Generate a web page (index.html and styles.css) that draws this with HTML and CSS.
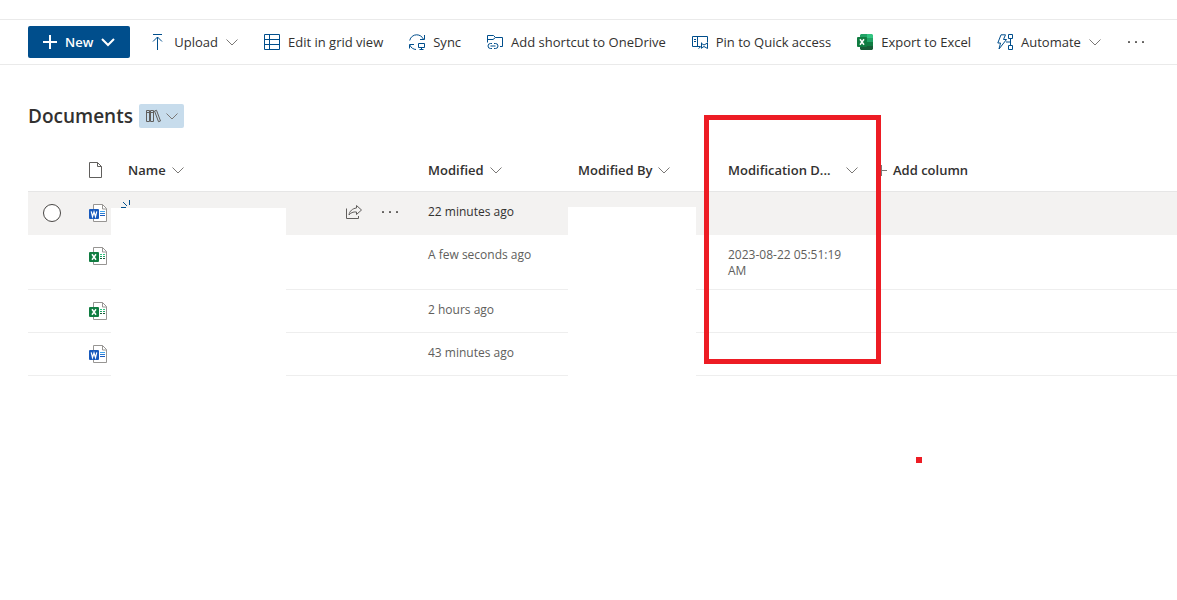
FILE: index.html
```html
<!DOCTYPE html>
<html lang="en">
<head>
    <meta charset="utf-8">
    <title>Documents</title>
    <link rel="stylesheet" href="styles.css">
</head>
<body>
    <svg class="defs" aria-hidden="true">
        <symbol id="chevron" viewBox="0 0 12 12"><path d="M.5 3.500 6 9l5.500-5.500"/></symbol>
        <symbol id="dots" viewBox="0 0 18 16"><g fill="currentColor" stroke="none"><rect x="1" y="7" width="2" height="2" rx=".6"/><rect x="8" y="7" width="2" height="2" rx=".6"/><rect x="15" y="7" width="2" height="2" rx=".6"/></g></symbol>
        <symbol id="word" viewBox="0 0 18 18">
            <path d="M4.500.5h9l4 4v13h-13z" fill="#fff" stroke="#979593"/>
            <path d="M13.500.5v4.500h4" fill="none" stroke="#979593"/>
            <path d="M11 7.500h5" stroke="#41a5ee"/><path d="M11 9.500h5" stroke="#2b7cd3"/><path d="M11 11.500h5" stroke="#185abd"/>
            <rect y="5" width="10" height="10" rx="1" fill="#185abd" stroke="none"/>
            <path d="M2.200 7.300 3.500 12.500 5 8l1.500 4.500 1.300-5.200" fill="none" stroke="#fff" stroke-width="1.200"/>
        </symbol>
        <symbol id="excel" viewBox="0 0 18 18">
            <path d="M4.500.5h9l4 4v13h-13z" fill="#fff" stroke="#979593"/>
            <path d="M13.500.5v4.500h4" fill="none" stroke="#979593"/>
            <path d="M11 7.500h2m1 0h2" stroke="#33c481"/><path d="M11 9.500h2m1 0h2" stroke="#21a366"/><path d="M11 11.500h2m1 0h2" stroke="#185c37"/>
            <rect y="5" width="10" height="10" rx="1" fill="#107c41" stroke="none"/>
            <path d="m3 7.300 4 5.400m0-5.400-4 5.400" stroke="#fff" stroke-width="1.500"/>
        </symbol>
    </svg>

    <nav class="toolbar" aria-label="Library commands">
        <button class="new-btn">
            <svg class="icon" viewBox="0 0 16 16"><path d="M8 1v14M1 8h14"/></svg>
            <span>New</span>
            <svg class="icon" viewBox="0 0 16 16"><path d="m2 5 6 6 6-6"/></svg>
        </button>
        <button class="cmd">
            <svg class="icon" viewBox="0 0 16 16"><path d="M3 .5h9M7.500 16V3M3 7.500 7.500 3 12 7.500"/></svg>
            <span>Upload</span>
            <svg class="chevron"><use href="#chevron"/></svg>
        </button>
        <button class="cmd">
            <svg class="icon" viewBox="0 0 16 16"><path d="M.5.5h15v15H.5zM.5 5.500h15M.5 10.500h15M5.500.5v15"/></svg>
            <span>Edit in grid view</span>
        </button>
        <button class="cmd">
            <svg class="icon" viewBox="0 0 16 16"><path d="M.7 6.500C1.500 3 4.300.8 7.700.8c3 0 5.500 1.700 6.800 4.500M15.500 1v4.500H11M.5 14.500V10.500H5M.8 11c1.100 2.700 3.600 4.400 6.200 4.500M9.500 9.500h6v4h-6zM12.500 13.500v2M10.500 15.500h4"/></svg>
            <span>Sync</span>
        </button>
        <button class="cmd">
            <svg class="icon" viewBox="0 0 16 16"><path d="M.5 8.500v-7h6l2 2h7v9H13M.5 5.500H6l2.500-2M5 9.500H3.500a2.500 2.500 0 0 0 0 5H5M7 9.500h1.500a2.500 2.500 0 0 1 0 5H7M3.500 12h5"/></svg>
            <span>Add shortcut to OneDrive</span>
        </button>
        <button class="cmd">
            <svg class="icon" viewBox="0 0 16 16"><path d="M8 12.500H.5v-10h15v6M5.500 2.500v10M2 5.500h2M2 7.500h2M9.500 8.500v6M9.500 9.500l2.500 1.500 3.500-2v5.500L12 12.500 9.500 14M6.500 14.500l3-2.500"/></svg>
            <span>Pin to Quick access</span>
        </button>
        <button class="cmd">
            <svg class="icon app" viewBox="0 0 16 16">
                <path fill="#21a366" d="M4 0h6v4H3V1z"/><path fill="#33c481" d="M10 0h5l1 1v3h-6z"/>
                <path fill="#107c41" d="M3 4h7v4H3zM10 8h6v4h-6z"/><path fill="#21a366" d="M10 4h6v4h-6z"/>
                <path fill="#185c37" d="M3 8h7v4h6v3l-1 1H4l-1-1z"/>
                <rect y="3" width="10" height="10" rx="1" fill="#107c41"/>
                <path d="m3 5.200 4 5.600m0-5.600-4 5.600" stroke="#fff" stroke-width="1.500"/>
            </svg>
            <span>Export to Excel</span>
        </button>
        <button class="cmd">
            <svg class="icon" viewBox="0 0 16 16"><path d="M4 .8h4.500L6.500 5.500h3L2 15l1.500-6H.8zM11.500.5h4v4h-4zM11.500 11.500h4v4h-4zM13.500 4.500v7M9 8h4.500"/></svg>
            <span>Automate</span>
            <svg class="chevron"><use href="#chevron"/></svg>
        </button>
        <button class="cmd" aria-label="More commands"><svg class="dots"><use href="#dots"/></svg></button>
    </nav>

    <main class="library">
        <header class="title">
            <h1>Documents</h1>
            <button class="view-btn" aria-label="Switch library">
                <svg class="books" viewBox="0 0 16 14"><path d="M1.500 1.500h3v11h-3zM5.500 1.500h3v11h-3zM9.500 2l2-.7 4 10.700-2 .7zM2 3.500h2M6 3.500h2"/></svg>
                <svg class="chevron"><use href="#chevron"/></svg>
            </button>
        </header>

        <table class="files">
            <colgroup>
                <col class="col-check"><col class="col-type"><col class="col-name">
                <col class="col-field"><col class="col-field"><col class="col-field"><col>
            </colgroup>
            <thead>
                <tr>
                    <th></th>
                    <th class="type"><svg class="file-icon" viewBox="0 0 18 18"><path d="M.5 1.500h8l4 4v11H.5zM8.500 1.500v4h4"/></svg></th>
                    <th><button class="sort"><span>Name</span><svg class="chevron"><use href="#chevron"/></svg></button></th>
                    <th><button class="sort"><span>Modified</span><svg class="chevron"><use href="#chevron"/></svg></button></th>
                    <th><button class="sort"><span>Modified By</span><svg class="chevron"><use href="#chevron"/></svg></button></th>
                    <th><button class="sort full"><span>Modification D...</span><svg class="chevron"><use href="#chevron"/></svg></button></th>
                    <th class="add"><button class="sort"><svg class="chevron" viewBox="0 0 12 12"><path d="M6.500 1v11M1 6.500h11"/></svg><span>Add column</span></button></th>
                </tr>
            </thead>
            <tbody>
                <tr class="active">
                    <td class="check"><input type="checkbox" aria-label="Select row"></td>
                    <td class="type"><svg class="file-icon"><use href="#word"/></svg></td>
                    <td class="name">
                        <svg class="new-mark" viewBox="0 0 10 10"><path d="M8.500 0v5M2 2l4 4M0 7.500h5"/></svg>
                        <div class="actions">
                            <button aria-label="Share"><svg class="icon" viewBox="0 0 16 16"><path d="M.5 4.500v10h12V12M10.500 1.500l5 4.500-5 4.500V8C7 7.500 4.500 9 3 11c.5-4 3.500-6.500 7.500-7z"/></svg></button>
                            <button aria-label="More actions"><svg class="dots"><use href="#dots"/></svg></button>
                        </div>
                    </td>
                    <td>22 minutes ago</td>
                    <td></td>
                    <td></td>
                    <td></td>
                </tr>
                <tr>
                    <td></td>
                    <td class="type"><svg class="file-icon"><use href="#excel"/></svg></td>
                    <td></td>
                    <td>A few seconds ago</td>
                    <td></td>
                    <td>2023-08-22 05:51:19 AM</td>
                    <td></td>
                </tr>
                <tr>
                    <td></td>
                    <td class="type"><svg class="file-icon"><use href="#excel"/></svg></td>
                    <td></td>
                    <td>2 hours ago</td>
                    <td></td>
                    <td></td>
                    <td></td>
                </tr>
                <tr>
                    <td></td>
                    <td class="type"><svg class="file-icon"><use href="#word"/></svg></td>
                    <td></td>
                    <td>43 minutes ago</td>
                    <td></td>
                    <td></td>
                    <td></td>
                </tr>
            </tbody>
        </table>

        <div class="cover cover-name"></div>
        <div class="cover cover-author"></div>
        <div class="highlight"></div>
        <div class="marker"></div>
    </main>
</body>
</html>
```
FILE: styles.css
```css
* {
    box-sizing: border-box;
}

body {
    margin: 0;
    padding-top: 19px;
    background: #fff;
    color: #323130;
    font-family: "Segoe UI", "Open Sans", "Noto Sans", sans-serif;
    font-size: 13px;
    overflow-x: hidden;
}

button {
    display: flex;
    align-items: center;
    padding: 0;
    border: 0;
    background: none;
    color: inherit;
    font: inherit;
    white-space: nowrap;
    cursor: pointer;
}

svg {
    display: block;
    flex: none;
    fill: none;
    stroke: currentColor;
}

.defs {
    position: absolute;
    width: 0;
    height: 0;
}

.icon {
    width: 16px;
    height: 16px;
}

.chevron {
    width: 12px;
    height: 12px;
    color: #7a7876;
}

.dots {
    width: 18px;
    height: 16px;
    color: #605e5c;
}

/* command bar */
.toolbar {
    display: flex;
    align-items: center;
    gap: 26px;
    height: 46px;
    padding: 0 28px;
    border-top: 1px solid #eaeaea;
    border-bottom: 1px solid #eaeaea;
}

.new-btn {
    gap: 7px;
    height: 32px;
    margin-right: -6px;
    padding: 0 14px;
    border-radius: 2px;
    background: #004e8c;
    color: #fff;
    font-weight: 600;
}

.new-btn .icon {
    stroke-width: 2;
}

.cmd {
    gap: 8px;
}

.cmd .icon {
    color: #004e8c;
}

.cmd .app {
    stroke: none;
}

/* library */
.library {
    position: relative;
    height: 500px;
    padding: 39px 0 0 28px;
}

.title {
    display: flex;
    align-items: center;
    gap: 6px;
    height: 24px;
}

h1 {
    margin: 0;
    font-size: 19px;
    line-height: 24px;
    font-weight: 600;
}

.view-btn {
    gap: 5px;
    height: 24px;
    padding: 0 6px;
    border-radius: 2px;
    background: #c7dcec;
}

.books {
    width: 16px;
    height: 14px;
    color: #605e5c;
}

.files {
    width: 100%;
    margin-top: 21px;
    border-collapse: separate;
    border-spacing: 0;
    table-layout: fixed;
}

.col-check {
    width: 52px;
}

.col-type {
    width: 40px;
}

.col-name {
    width: 300px;
}

.col-field {
    width: 150px;
}

th {
    height: 43px;
    padding: 0 8px;
    border-bottom: 1px solid #e6e6e6;
    font-weight: 600;
    text-align: left;
}

.sort {
    gap: 6px;
    padding-right: 4px;
}

.sort.full {
    width: 100%;
    justify-content: space-between;
}

th.add {
    padding-left: 5px;
}

td {
    height: 43px;
    padding: 12px 8px 10px;
    border-bottom: 1px solid #eeeeee;
    color: #605e5c;
    font-size: 12px;
    line-height: 16px;
    vertical-align: top;
}

.type {
    padding-left: 9px;
    padding-right: 0;
}

.file-icon {
    width: 18px;
    height: 18px;
    color: #605e5c;
}

.active td {
    border-bottom-color: #f3f2f1;
    background: #f3f2f1;
    color: #323130;
}

.check input {
    display: block;
    width: 18px;
    height: 18px;
    margin: 0 0 0 7px;
    appearance: none;
    border: 1px solid #484644;
    border-radius: 50%;
    background: #fff;
}

.name {
    position: relative;
}

.new-mark {
    position: absolute;
    left: 1px;
    top: 8px;
    width: 10px;
    height: 10px;
    color: #004e8c;
}

.actions {
    display: flex;
    justify-content: flex-end;
    gap: 19px;
    padding-right: 13px;
}

.actions .icon {
    color: #605e5c;
}

/* blank covers over the name and author columns */
.cover {
    position: absolute;
    background: #fff;
}

.cover-name {
    left: 111px;
    top: 143px;
    width: 175px;
    height: 200px;
}

.cover-author {
    left: 568px;
    top: 142px;
    width: 128px;
    height: 201px;
}

.highlight {
    position: absolute;
    left: 704px;
    top: 50px;
    width: 177px;
    height: 249px;
    border: 5px solid #ed1c24;
}

.marker {
    position: absolute;
    left: 916px;
    top: 392px;
    width: 6px;
    height: 6px;
    background: #ed1c24;
}
```
